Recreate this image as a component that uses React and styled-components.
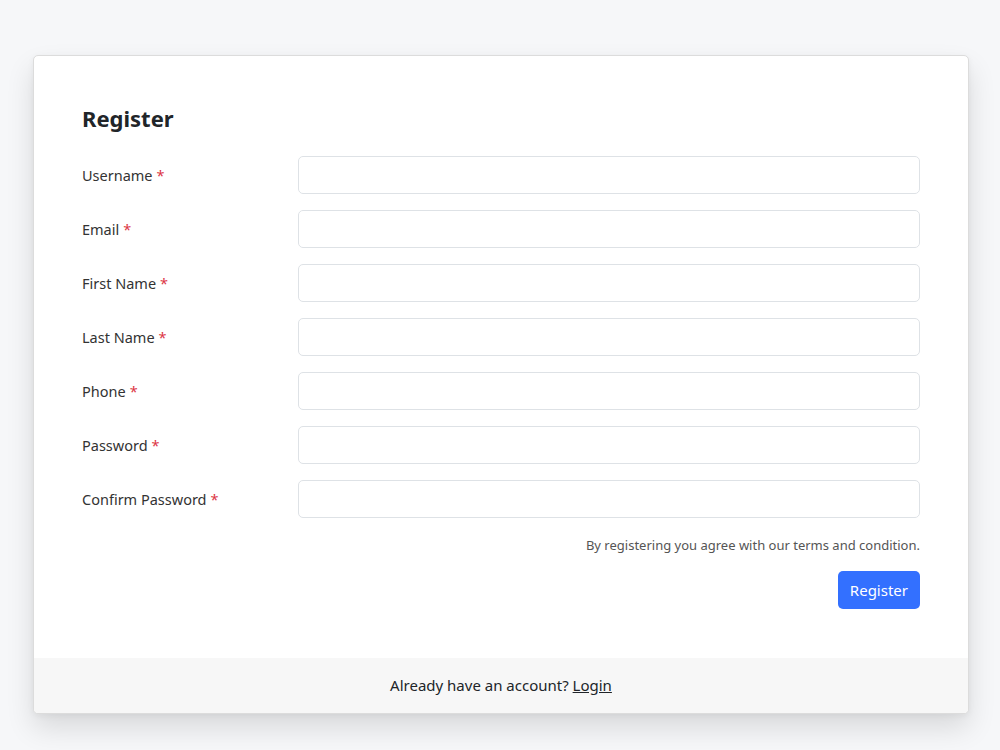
import React from "react";
import styled, { createGlobalStyle } from "styled-components";

const GlobalStyle = createGlobalStyle`
  * { box-sizing: border-box; }
  body {
    margin: 0;
    background: #f6f7f9;
    font-family: "Noto Sans", "Open Sans", sans-serif;
    color: #212529;
  }
`;

const Page = styled.div`
  min-height: 100vh;
  padding: 55px 31px 40px 33px;
`;

const Card = styled.div`
  background: #fff;
  border: 1px solid #dcdcdc;
  border-radius: 5px;
  box-shadow: 0 14px 28px rgba(0, 0, 0, 0.12), 0 2px 6px rgba(0, 0, 0, 0.05);
  overflow: hidden;
`;

const CardBody = styled.div`
  padding: 48px 48px 49px 48px;
`;

const Title = styled.h4`
  margin: 0 0 23px;
  font-size: 22px;
  font-weight: 700;
  line-height: 29px;
  color: #212529;
`;

const Row = styled.div`
  display: grid;
  grid-template-columns: 192px 1fr;
  gap: 24px;
  align-items: center;
  margin-bottom: 16px;
`;

const Label = styled.label`
  font-size: 14.5px;
  color: #333;
`;

const Required = styled.span`
  color: #dc3545;
  margin-left: 4px;
`;

const Input = styled.input`
  height: 38px;
  width: 100%;
  border: 1px solid #dee2e6;
  border-radius: 5px;
  padding: 6px 12px;
  font: inherit;
  outline: none;
`;

const Terms = styled.p`
  margin: 17px 0 16px;
  text-align: right;
  font-size: 13px;
  line-height: 20px;
  color: #555;
`;

const Actions = styled.div`
  display: flex;
  justify-content: flex-end;
`;

const Button = styled.button`
  height: 38px;
  padding: 0 12px;
  border: none;
  border-radius: 5px;
  background: #3370ff;
  color: #fff;
  font-family: inherit;
  font-size: 15px;
  cursor: pointer;
`;

const Footer = styled.div`
  background: #f7f7f7;
  padding: 16px;
  text-align: center;
  font-size: 15px;
  line-height: 23px;
  color: #212529;
`;

const Link = styled.a`
  color: #212529;
  text-decoration: underline;
`;

const fields = [
  "Username",
  "Email",
  "First Name",
  "Last Name",
  "Phone",
  "Password",
  "Confirm Password",
];

export default function App() {
  return (
    <>
      <GlobalStyle />
      <Page>
        <Card>
          <CardBody>
            <Title>Register</Title>
            {fields.map((f) => (
              <Row key={f}>
                <Label>
                  {f}
                  <Required>*</Required>
                </Label>
                <Input type={f.includes("Password") ? "password" : "text"} />
              </Row>
            ))}
            <Terms>By registering you agree with our terms and condition.</Terms>
            <Actions>
              <Button>Register</Button>
            </Actions>
          </CardBody>
          <Footer>
            Already have an account? <Link href="#">Login</Link>
          </Footer>
        </Card>
      </Page>
    </>
  );
}
